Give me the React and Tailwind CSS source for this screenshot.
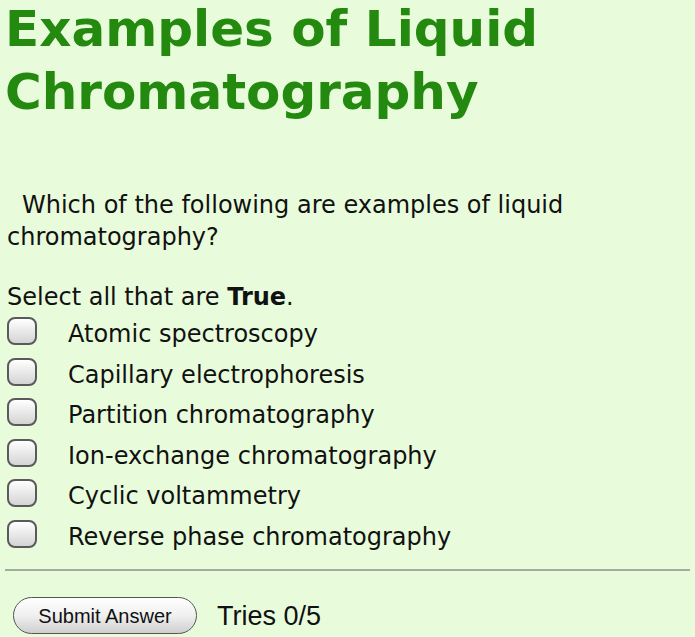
import React from 'react';

const choices = [
  'Atomic spectroscopy',
  'Capillary electrophoresis',
  'Partition chromatography',
  'Ion-exchange chromatography',
  'Cyclic voltammetry',
  'Reverse phase chromatography',
];

const Checkbox = () => (
  <span className="block mt-[3px] w-[30px] h-[28px] rounded-[8px] border-2 border-[#5a5a5a] bg-gradient-to-b from-white to-[#d4d4d4] shrink-0" />
);

export default function App() {
  return (
    <div className="min-h-[637px] w-full bg-[#e8fcdc] text-[#111] font-['DejaVu_Sans',Verdana,sans-serif] overflow-hidden">
      <h1 className="pl-[5px] text-[50px] font-bold text-[#24890f]">
        <span className="block leading-[59px]">Examples of Liquid</span>
        <span className="block leading-[67px]">Chromatography</span>
      </h1>

      <div className="mt-[63px] pl-[7px] text-[24px] leading-[32px]">
        <p className="indent-[15px]">Which of the following are examples of liquid chromatography?</p>
        <p className="mt-[28px]">
          Select all that are <b>True</b>.
        </p>
      </div>

      <ul className="pl-[7px] mt-[1px] flex flex-col">
        {choices.map((c) => (
          <li key={c} className="flex items-start h-[40.6px] leading-[40.6px] text-[24px]">
            <Checkbox />
            <span className="ml-[31px]">{c}</span>
          </li>
        ))}
      </ul>

      <div className="mx-[5px] mt-[11px] h-[2px] bg-[#a3aba0]" />

      <div className="flex items-center pl-[13px] mt-[25px]">
        <button className="h-[37px] w-[184px] rounded-full border-[1.5px] border-[#555] bg-gradient-to-b from-white via-[#f0f0f0] to-[#cfcfcf] font-['Liberation_Sans',Arial,sans-serif] text-[20px] text-[#111]">
          Submit Answer
        </button>
        <span className="ml-[20px] font-['Liberation_Sans',Arial,sans-serif] text-[27px]">Tries 0/5</span>
      </div>
    </div>
  );
}
